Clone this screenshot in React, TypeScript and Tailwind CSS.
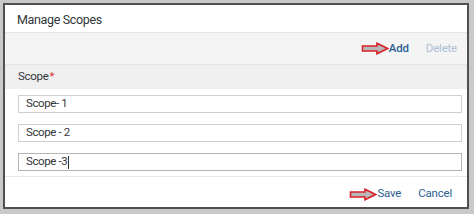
import React from 'react'

function PointerArrow() {
  return (
    <svg width="28" height="13" viewBox="0 0 28 13" className="shrink-0">
      <polygon
        points="1.5,4 16,4 16,1.2 26.5,6.5 16,11.8 16,9 1.5,9"
        fill="#b9b9b9"
        stroke="#d8232a"
        strokeWidth="1.6"
        strokeLinejoin="miter"
      />
    </svg>
  )
}

const scopes = ['Scope- 1', 'Scope - 2', 'Scope -3']

export default function App() {
  return (
    <div
      className="w-[474px] h-[214px] bg-[#c9c9c9] pt-[3px] pl-[3px] overflow-hidden"
      style={{ fontFamily: 'Roboto, "Liberation Sans", sans-serif' }}
    >
      <div className="w-[466px] h-[206px] bg-white border-2 border-[#505050] flex flex-col text-[#32363a]">
        {/* Header */}
        <div className="h-[28px] flex items-center pt-[3px] pl-[12px] border-b border-[#e6e6e6]">
          <span className="text-[12.5px] tracking-[-0.35px]">Manage Scopes</span>
        </div>

        {/* Toolbar */}
        <div className="h-[32px] bg-[#f4f4f4] border-b border-[#e3e3e3] flex items-center justify-end pr-[10px] text-[11.5px] tracking-[-0.2px]">
          <div className="flex items-center">
            <PointerArrow />
            <span className="text-[#2b5d91] font-medium">Add</span>
          </div>
          <span className="text-[#aac0d6] ml-[17px]">Delete</span>
        </div>

        {/* Column header */}
        <div className="h-[24px] bg-[#efefef] flex items-center pl-[13px] text-[11.5px] tracking-[-0.3px]">
          Scope<span className="text-[#d0342c] ml-[1px]">*</span>
        </div>

        {/* Inputs */}
        <div className="flex flex-col gap-[11px] pt-[6px] pb-[5px] pl-[13px] pr-[5px] border-b border-[#e6e6e6]">
          {scopes.map((s, i) => (
            <div
              key={s}
              className={`h-[18px] flex items-center pl-[7px] bg-white border text-[11.5px] tracking-[-0.4px] ${
                i === 2 ? 'border-[#b5b5b5]' : 'border-[#cfcfcf]'
              }`}
            >
              {s}
              {i === 2 && <span className="w-px h-[13px] bg-[#32363a] ml-[1px]" />}
            </div>
          ))}
        </div>

        {/* Footer */}
        <div className="flex-1 flex items-center justify-end pt-[4px] pr-[15px] text-[11.5px] tracking-[-0.2px]">
          <div className="flex items-center">
            <PointerArrow />
            <span className="text-[#2b5d91]">Save</span>
          </div>
          <span className="text-[#2b5d91] ml-[17px]">Cancel</span>
        </div>
      </div>
    </div>
  )
}
